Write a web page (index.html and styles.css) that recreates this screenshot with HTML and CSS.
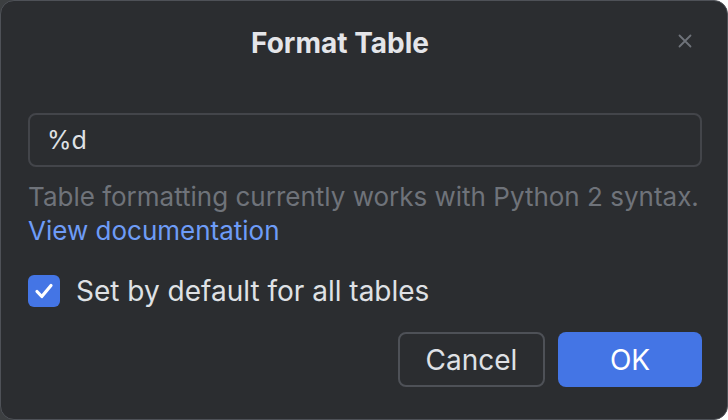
FILE: index.html
```html
<!DOCTYPE html>
<html lang="en">

<head>
    <meta charset="UTF-8">
    <meta name="viewport" content="width=device-width, initial-scale=1.0">
    <title>Format Table</title>
    <link rel="stylesheet" href="styles.css">
</head>

<body>
    <div class="dialog">
        <!-- Title bar -->
        <div class="title-bar">
            <span class="title">Format Table</span>
            <span class="close-btn">
                <svg width="14" height="14" viewBox="0 0 14 14">
                    <path d="M1.5 1.5 L12.5 12.5 M12.5 1.5 L1.5 12.5" stroke="#6f737a" stroke-width="1.8" stroke-linecap="round" />
                </svg>
            </span>
        </div>

        <!-- Format field -->
        <div class="field">%d</div>
        <p class="hint">Table formatting currently works with Python 2 syntax.</p>
        <a class="doc-link" href="#">View documentation</a>

        <!-- Checkbox row -->
        <label class="check-row">
            <span class="checkbox">
                <svg width="22" height="22" viewBox="0 0 22 22">
                    <path d="M4 11.5 L8.8 16.5 L18 5.5" fill="none" stroke="#ffffff" stroke-width="3.2" stroke-linecap="round" stroke-linejoin="round" />
                </svg>
            </span>
            Set by default for all tables
        </label>

        <!-- Buttons -->
        <div class="buttons">
            <button class="btn cancel-btn">Cancel</button>
            <button class="btn ok-btn">OK</button>
        </div>
    </div>
</body>

</html>
```

FILE: styles.css
```css
html {
    background: linear-gradient(135deg, #3c3f41 0%, #3c3f41 50%, #ffffff 50%, #ffffff 100%);
}

body {
    margin: 0;
    padding: 0;
    font-family: Inter, "Noto Sans", sans-serif;
    color: #dfe1e5;
    width: 728px;
    height: 420px;
}

.dialog {
    box-sizing: border-box;
    width: 728px;
    height: 420px;
    background-color: #2b2d30;
    border: 1px solid #4e5157;
    border-radius: 14px;
    padding: 0 25px 0 27px;
    display: flex;
    flex-direction: column;
}

/* Title bar */
.title-bar {
    position: relative;
    display: flex;
    justify-content: center;
    align-items: center;
    height: 84px;
}

.title {
    font-size: 28px;
    font-weight: 700;
    color: #e4e5e9;
    margin-right: 50px;
}

.close-btn {
    position: absolute;
    right: 10px;
    top: 33px;
    display: flex;
}

/* Input field */
.field {
    margin-top: 28px;
    height: 54px;
    box-sizing: border-box;
    border: 2px solid #43454a;
    border-radius: 8px;
    padding: 0 17px;
    display: flex;
    align-items: center;
    font-size: 25px;
    color: #dfe1e5;
}

.hint {
    margin: 13px 0 0;
    font-size: 26px;
    color: #6f737a;
    line-height: 34px;
    white-space: nowrap;
}

.doc-link {
    font-size: 26px;
    line-height: 34px;
    color: #6e9cf7;
    text-decoration: none;
    align-self: flex-start;
}

/* Checkbox */
.check-row {
    margin-top: 27px;
    display: flex;
    align-items: center;
    font-size: 28px;
    color: #dfe1e5;
    line-height: 32px;
}

.checkbox {
    width: 32px;
    height: 32px;
    background-color: #4475e5;
    border-radius: 6px;
    display: flex;
    align-items: center;
    justify-content: center;
    margin-right: 16px;
}

/* Buttons */
.buttons {
    margin-top: 25px;
    display: flex;
    justify-content: flex-end;
    gap: 13px;
}

.btn {
    font-family: Inter, "Noto Sans", sans-serif;
    font-size: 28px;
    height: 55px;
    border-radius: 8px;
    cursor: pointer;
}

.cancel-btn {
    width: 147px;
    background-color: transparent;
    color: #dfe1e5;
    border: 2px solid #4e5157;
}

.ok-btn {
    width: 144px;
    background-color: #4475e5;
    color: #ffffff;
    border: none;
}
```
